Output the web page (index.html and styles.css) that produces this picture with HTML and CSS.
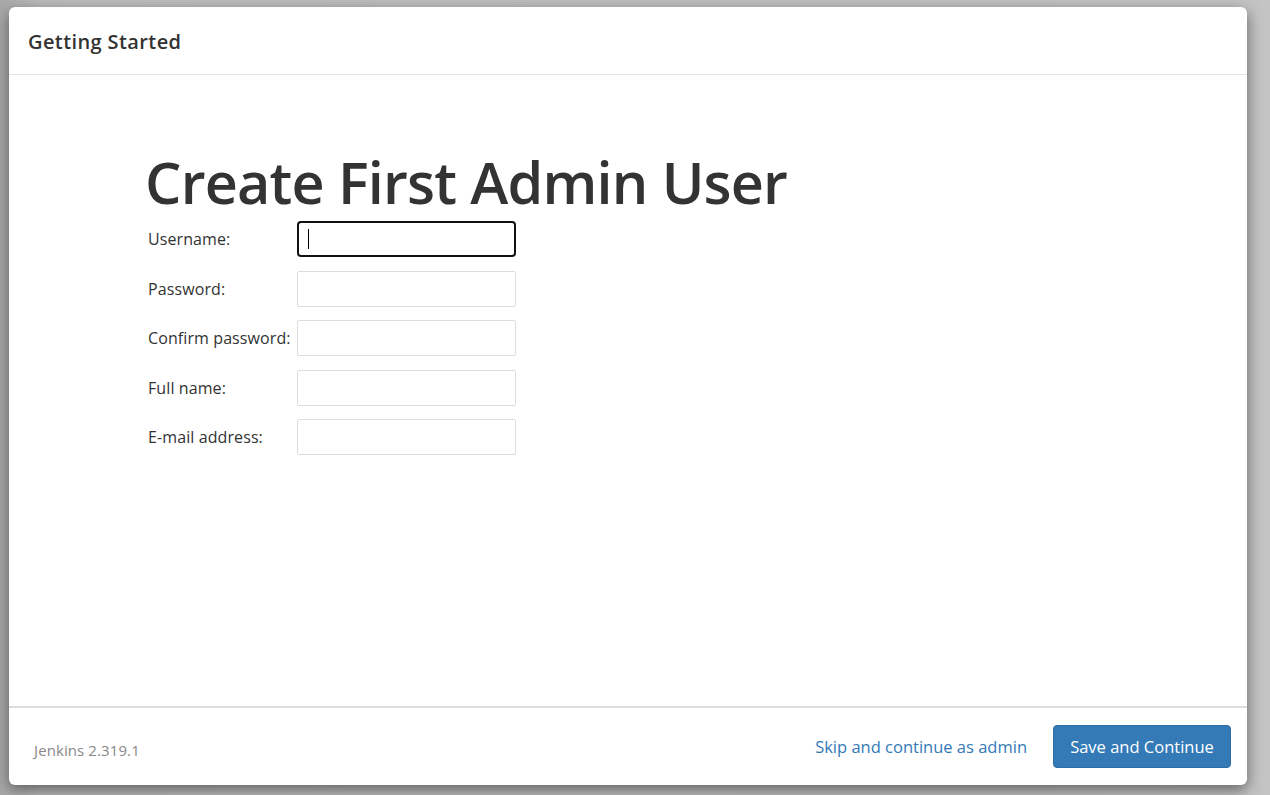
FILE: index.html
```html
<!DOCTYPE html>
<html>
<head>
<meta charset="utf-8">
<link rel="stylesheet" href="styles.css">
</head>
<body>
<div class="modal">
  <div class="modal-header">
    <h4 class="modal-title">Getting Started</h4>
  </div>
  <div class="modal-body">
    <div class="content">
      <h1 class="title">Create First Admin User</h1>
      <div class="form">
        <div class="row"><label class="label">Username:</label><div class="input focused"><span class="caret"></span></div></div>
        <div class="row"><label class="label">Password:</label><div class="input"></div></div>
        <div class="row"><label class="label">Confirm password:</label><div class="input"></div></div>
        <div class="row"><label class="label">Full name:</label><div class="input"></div></div>
        <div class="row"><label class="label">E-mail address:</label><div class="input"></div></div>
      </div>
    </div>
  </div>
  <div class="modal-footer">
    <div class="version">Jenkins 2.319.1</div>
    <div class="actions">
      <a class="skip">Skip and continue as admin</a>
      <button class="btn">Save and Continue</button>
    </div>
  </div>
</div>
</body>
</html>
```
FILE: styles.css
```css
html, body {
  margin: 0;
  padding: 0;
  height: 100%;
}
body {
  background: linear-gradient(to right, #a8a8a8 0px, #bdbdbd 40px, #c4c4c4 100%);
  font-family: "Open Sans", "Noto Sans", sans-serif;
  color: #333;
  overflow: hidden;
}
.modal {
  box-sizing: border-box;
  margin: 7px 23px 0 9px;
  height: 778px;
  background: #fff;
  border-radius: 6px;
  box-shadow: 0 5px 15px rgba(0,0,0,0.5);
  display: flex;
  flex-direction: column;
}
.modal-header {
  height: 68px;
  box-sizing: border-box;
  border-bottom: 1px solid #e5e5e5;
  padding: 0 19px;
  display: flex;
  align-items: center;
}
.modal-title {
  margin: 2px 0 0 0;
  font-size: 20px;
  font-weight: 600;
  color: #333;
  letter-spacing: 0.4px;
}
.modal-body {
  flex: 1;
}
.content {
  padding: 72px 0 0 136px;
}
.title {
  margin: 0 0 4px 0;
  font-size: 57.5px;
  font-weight: 600;
  line-height: 70px;
  color: #333;
  letter-spacing: -0.8px;
}
.form {
  display: flex;
  flex-direction: column;
  gap: 13.5px;
  padding-left: 3px;
}
.row {
  display: flex;
  align-items: center;
  height: 36px;
}
.label {
  width: 149px;
  font-size: 16px;
  color: #333;
  letter-spacing: 0.1px;
  white-space: nowrap;
}
.input {
  box-sizing: border-box;
  width: 219px;
  height: 36px;
  border: 1px solid #ddd;
  border-radius: 2px;
  display: flex;
  align-items: center;
}
.input.focused {
  border: 2px solid #111;
  border-radius: 4px;
}
.caret {
  display: block;
  width: 1px;
  height: 20px;
  background: #000;
  margin-left: 9px;
}
.modal-footer {
  height: 79px;
  box-sizing: border-box;
  border-top: 2px solid #ddd;
  display: flex;
  align-items: center;
  justify-content: space-between;
  padding: 0 16px 0 25px;
}
.version {
  font-size: 15px;
  color: #888;
  margin-top: 6px;
  letter-spacing: 0.1px;
}
.actions {
  display: flex;
  align-items: center;
  gap: 26px;
}
.skip {
  color: #337ab7;
  font-size: 16.5px;
  letter-spacing: 0;
}
.btn {
  box-sizing: border-box;
  height: 43px;
  width: 178px;
  background: #337ab7;
  border: 1px solid #2e6da4;
  border-radius: 4px;
  color: #fff;
  font-family: "Open Sans", "Noto Sans", sans-serif;
  font-size: 16.5px;
  letter-spacing: 0;
  padding: 0;
}
```
